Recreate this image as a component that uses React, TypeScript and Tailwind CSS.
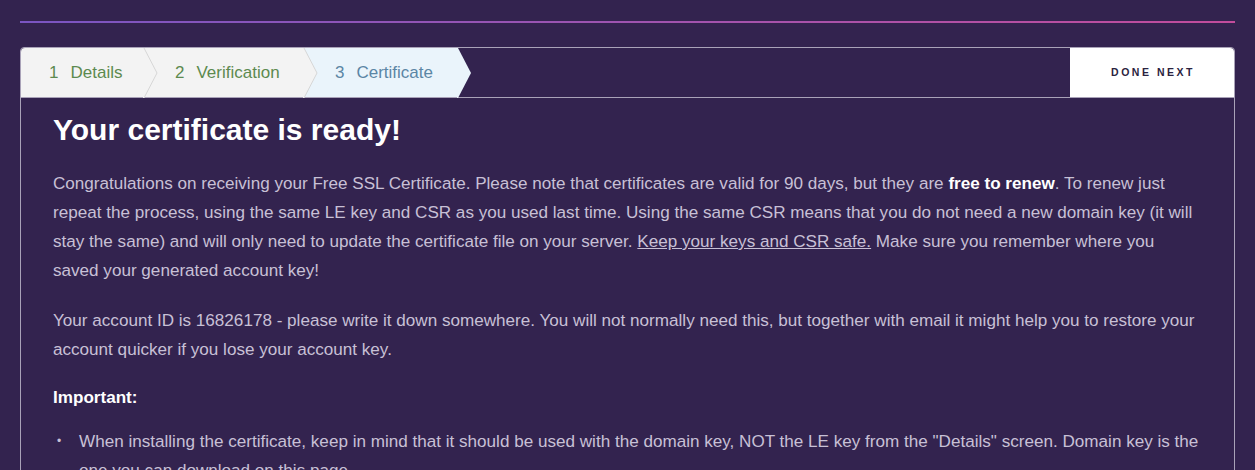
import React from 'react';

const steps = [
  { n: 1, label: 'Details', w: 'w-[123px]', pl: 'pl-[28px]', bg: '#f3f3f3', color: 'text-[#5c8a4f]', z: 'z-30', edge: true },
  { n: 2, label: 'Verification', w: 'w-[160px]', pl: 'pl-[31px]', bg: '#f3f3f3', color: 'text-[#5c8a4f]', z: 'z-20', edge: true },
  { n: 3, label: 'Certificate', w: 'w-[154px]', pl: 'pl-[31px]', bg: '#eaf4fb', color: 'text-[#5b86a5]', z: 'z-10', edge: false },
];

const Chevron = ({ fill, edge }: { fill: string; edge: boolean }) => (
  <svg
    className="absolute top-0 -right-[14px] h-[50px] w-[15px]"
    viewBox="0 0 15 50"
    preserveAspectRatio="none"
  >
    <polygon points="0,0 1,0 14,25 1,50 0,50" fill={fill} />
    {edge && <polyline points="1,0 14,25 1,50" fill="none" stroke="#d6d6d6" strokeWidth="1" />}
  </svg>
);

export default function App() {
  return (
    <div className="min-h-[470px] w-full bg-[#33234f] pt-[21px] font-['Liberation_Sans',Arial,sans-serif]">
      {/* top gradient rule */}
      <div className="mx-[20px] h-[2px] bg-gradient-to-r from-[#7a55c2] to-[#c24c9c]" />

      {/* wizard panel */}
      <div className="mx-[20px] mt-[24px] rounded-t-[4px] border border-[#a9a2b8]">
        {/* step bar */}
        <div className="flex h-[50px] border-b border-[#a9a2b8]">
          {steps.map((s) => (
            <div
              key={s.n}
              className={`relative flex ${s.w} ${s.pl} ${s.z} items-center gap-[12px] text-[17px] ${s.color} ${s.n === 1 ? 'rounded-tl-[4px]' : ''}`}
              style={{ backgroundColor: s.bg }}
            >
              <span>{s.n}</span>
              <span>{s.label}</span>
              <Chevron fill={s.bg} edge={s.edge} />
            </div>
          ))}
          <div className="flex-1" />
          <button className="flex w-[164px] items-center justify-center rounded-tr-[4px] bg-white pl-[2px] text-[10.5px] font-bold tracking-[0.24em] text-[#2b2340]">
            DONE NEXT
          </button>
        </div>

        {/* content */}
        <div className="pl-[32px] pr-[38px] pt-[14px] pb-[10px] text-[17.1px] leading-[29px] text-[#c8c0d6]">
          <h1 className="text-[30px] leading-[36px] font-bold text-white">Your certificate is ready!</h1>

          <p className="mt-[21px]">
            Congratulations on receiving your Free SSL Certificate. Please note that certificates are valid for 90 days, but
            they are <strong className="font-bold text-white">free to renew</strong>. To renew just repeat the process, using
            the same LE key and CSR as you used last time. Using the same CSR means that you do not need a new domain key (it
            will stay the same) and will only need to update the certificate file on your server.{' '}
            <a className="underline">Keep your keys and CSR safe.</a> Make sure you remember where you saved your generated
            account key!
          </p>

          <p className="mt-[21px]">
            Your account ID is 16826178 - please write it down somewhere. You will not normally need this, but together with
            email it might help you to restore your account quicker if you lose your account key.
          </p>

          <p className="mt-[19px] font-bold text-white">Important:</p>

          <ul className="mt-[15px] -mr-[22px]">
            <li className="flex">
              <span className="w-[26px] shrink-0 pl-[4px] text-[12px]">•</span>
              <span>
                When installing the certificate, keep in mind that it should be used with the domain key, NOT the LE key from
                the "Details" screen. Domain key is the one you can download on this page.
              </span>
            </li>
          </ul>
        </div>
      </div>
    </div>
  );
}
